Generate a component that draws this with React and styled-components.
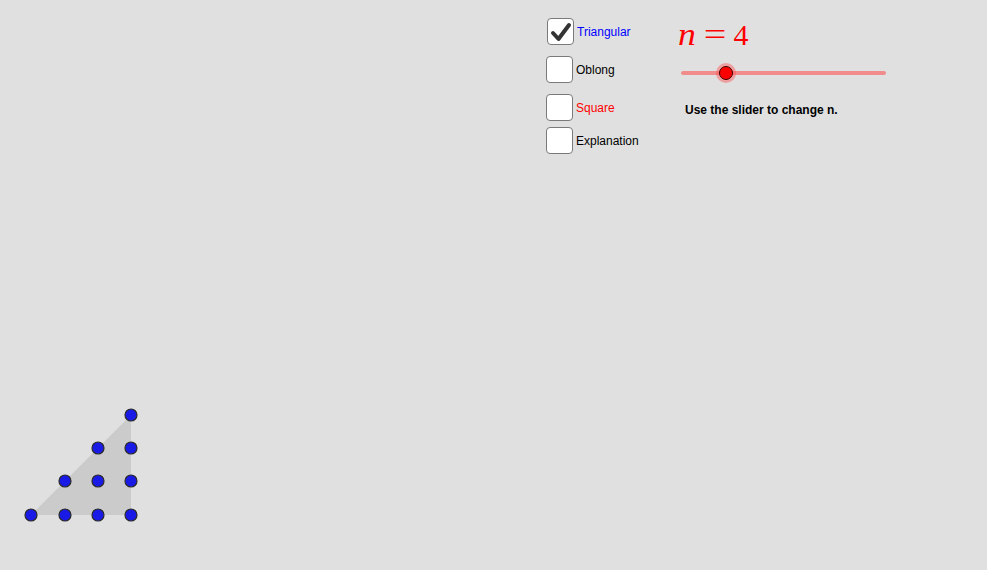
import React from "react";
import styled, { createGlobalStyle } from "styled-components";

const GlobalStyle = createGlobalStyle`
  html, body {
    margin: 0;
    padding: 0;
    background: #e0e0e0;
    font-family: "Liberation Sans", Arial, sans-serif;
  }
`;

const Canvas = styled.div`
  position: relative;
  width: 987px;
  height: 570px;
  background: #e0e0e0;
  overflow: hidden;
`;

const CheckList = styled.div`
  position: absolute;
  left: 546px;
  top: 18px;
  display: flex;
  flex-direction: column;
`;

const CheckRow = styled.label`
  display: flex;
  align-items: center;
  gap: 3px;
  height: 27px;
  margin-bottom: ${(p) => p.gap}px;
  font-size: 12px;
  color: ${(p) => p.color || "#000"};
`;

const Box = styled.span`
  box-sizing: border-box;
  width: 27px;
  height: 27px;
  border: 1.5px solid #7a7a7a;
  border-radius: 4px;
  background: #fff;
  display: flex;
  align-items: center;
  justify-content: center;
  margin-left: ${(p) => (p.checked ? 1 : 0)}px;
`;

const SliderPanel = styled.div`
  position: absolute;
  left: 678px;
  top: 16px;
  display: flex;
  flex-direction: column;
`;

const MathLabel = styled.div`
  font-family: "Liberation Serif", "DejaVu Serif", serif;
  font-size: 30px;
  color: #ff0000;
  height: 36px;
  line-height: 36px;
  display: flex;
  align-items: baseline;
  i {
    font-style: italic;
    font-size: 31px;
    display: inline-block;
    transform: scaleX(1.15);
    transform-origin: left center;
  }
`;

const Eq = styled.span`
  display: inline-block;
  margin: 0 10px 0 12px;
  font-size: 32px;
  transform: scaleX(1.25);
`;

const Track = styled.div`
  position: relative;
  margin-top: 19px;
  margin-left: 3px;
  width: 205px;
  height: 4px;
  border-radius: 2px;
  background: #f08c8c;
`;

const Knob = styled.div`
  position: absolute;
  top: 50%;
  left: ${(p) => p.x}px;
  width: 12px;
  height: 12px;
  margin: -7px 0 0 -7px;
  border-radius: 50%;
  background: #ff0000;
  border: 1px solid #3a0000;
  box-shadow: 0 0 0 3px rgba(255, 80, 80, 0.45);
`;

const Hint = styled.div`
  margin-top: 28px;
  margin-left: 7px;
  font-size: 12px;
  font-weight: bold;
  color: #000;
`;

const Figure = styled.svg`
  position: absolute;
  left: 0;
  top: 400px;
`;

const Check = () => (
  <svg width="22" height="20" viewBox="0 0 22 20">
    <path
      d="M3 11 L8.5 17 L19 3"
      fill="none"
      stroke="#333"
      strokeWidth="4"
      strokeLinecap="round"
      strokeLinejoin="round"
    />
  </svg>
);

const options = [
  { label: "Triangular", color: "#0000ff", checked: true, gap: 11 },
  { label: "Oblong", color: "#000", gap: 11 },
  { label: "Square", color: "#ff0000", gap: 6 },
  { label: "Explanation", color: "#000", gap: 0 },
];

const dots = [
  [31, 115], [65, 115], [98, 115], [131, 115],
  [65, 81], [98, 81], [131, 81],
  [98, 48], [131, 48],
  [131, 15],
];

export default function App() {
  return (
    <Canvas>
      <GlobalStyle />
      <CheckList>
        {options.map((o) => (
          <CheckRow key={o.label} color={o.color} gap={o.gap}>
            <Box checked={o.checked}>{o.checked && <Check />}</Box>
            {o.label}
          </CheckRow>
        ))}
      </CheckList>

      <SliderPanel>
        <MathLabel>
          <i>n</i>
          <Eq>=</Eq>4
        </MathLabel>
        <Track>
          <Knob x={45} />
        </Track>
        <Hint>Use the slider to change n.</Hint>
      </SliderPanel>

      <Figure width="160" height="130">
        <polygon points="31,115 131,15 131,115" fill="#cbcbcb" />
        {dots.map(([x, y]) => (
          <circle
            key={`${x}-${y}`}
            cx={x}
            cy={y}
            r="6"
            fill="#1a1ae6"
            stroke="#2a2a2a"
            strokeWidth="1.2"
          />
        ))}
      </Figure>
    </Canvas>
  );
}
